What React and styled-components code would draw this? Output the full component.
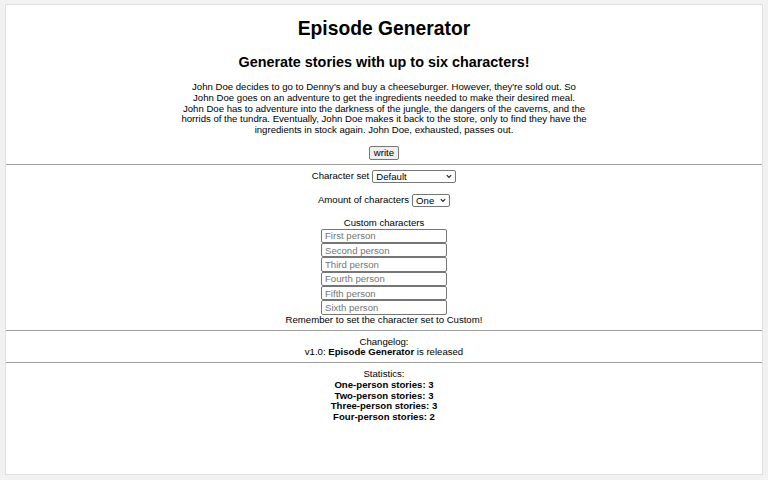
import React from "react";
import styled, { createGlobalStyle } from "styled-components";

const GlobalStyle = createGlobalStyle`
  html, body {
    margin: 0;
    padding: 0;
    background: #f2f2f2;
  }
  body {
    font-family: "Liberation Sans", Arial, sans-serif;
    font-size: 9.6px;
    color: #000;
  }
`;

const Page = styled.div`
  padding: 4px 5px 5px 5px;
  height: 480px;
  box-sizing: border-box;
`;

const Card = styled.div`
  background: #fff;
  border: 1px solid #e0e0e0;
  height: 100%;
  box-sizing: border-box;
  text-align: center;
  line-height: 10.75px;
`;

const Section = styled.section`
  padding: ${(p) => p.pad || "0"};
`;

const Title = styled.h1`
  font-size: 19.3px;
  line-height: 24px;
  margin: 12px 0 0;
`;

const Subtitle = styled.h2`
  font-size: 14.4px;
  line-height: 18px;
  margin: 12px 0 0;
`;

const Story = styled.p`
  margin: 11px auto 0;
  white-space: nowrap;
`;

const WriteButton = styled.button`
  font: inherit;
  margin-top: 10px;
  padding: 1px 4px;
  height: 14px;
  line-height: 10px;
  background: #efefef;
  border: 1px solid #767676;
  border-radius: 2px;
  color: #000;
`;

const Rule = styled.hr`
  border: none;
  border-top: 1px solid #a0a0a0;
  margin: ${(p) => p.gap || "4px"} 0 0;
`;

const Field = styled.div`
  margin-top: ${(p) => p.top || "0"};
  display: flex;
  justify-content: center;
  align-items: center;
  gap: 3px;
`;

const SelectBox = styled.span`
  position: relative;
  display: inline-flex;
`;

const Select = styled.select`
  appearance: none;
  font: inherit;
  height: 13px;
  width: ${(p) => p.w};
  padding: 0 0 0 3px;
  border: 1px solid #767676;
  border-radius: 2px;
  background: #fff;
  color: #000;
  line-height: 11px;
`;

const Chevron = styled.svg`
  position: absolute;
  right: 4px;
  top: 4px;
  width: 6px;
  height: 5px;
  pointer-events: none;
`;

const NameList = styled.div`
  display: flex;
  flex-direction: column;
  align-items: center;
`;

const NameInput = styled.input`
  font: inherit;
  width: 126px;
  height: 14.4px;
  box-sizing: border-box;
  padding: 0 3px;
  border: 1px solid #767676;
  border-radius: 2px;
  margin: 0;
  &::placeholder {
    color: #757575;
  }
`;

const Line = styled.div`
  margin-top: ${(p) => p.top || "0"};
`;

const Bold = styled.b``;

const Dropdown = ({ w, value, options }) => (
  <SelectBox>
    <Select w={w} defaultValue={value}>
      {options.map((o) => (
        <option key={o}>{o}</option>
      ))}
    </Select>
    <Chevron viewBox="0 0 6 5">
      <path d="M0.8 1.2 L3 3.4 L5.2 1.2" fill="none" stroke="#222" strokeWidth="1.2" />
    </Chevron>
  </SelectBox>
);

const storyLines = [
  "John Doe decides to go to Denny's and buy a cheeseburger. However, they're sold out. So",
  "John Doe goes on an adventure to get the ingredients needed to make their desired meal.",
  "John Doe has to adventure into the darkness of the jungle, the dangers of the caverns, and the",
  "horrids of the tundra. Eventually, John Doe makes it back to the store, only to find they have the",
  "ingredients in stock again. John Doe, exhausted, passes out.",
];

const characters = ["First", "Second", "Third", "Fourth", "Fifth", "Sixth"];

const stats = [
  ["One", 3],
  ["Two", 3],
  ["Three", 3],
  ["Four", 2],
];

export default function App() {
  return (
    <>
      <GlobalStyle />
      <Page>
        <Card>
          <Section>
            <Title>Episode Generator</Title>
            <Subtitle>Generate stories with up to six characters!</Subtitle>
            <Story>
              {storyLines.map((l, i) => (
                <React.Fragment key={i}>
                  {i > 0 && <br />}
                  {l}
                </React.Fragment>
              ))}
            </Story>
            <WriteButton>write</WriteButton>
          </Section>
          <Rule gap="4px" />
          <Section>
            <Field top="5px">
              Character set
              <Dropdown w="84px" value="Default" options={["Default", "Custom"]} />
            </Field>
            <Field top="11px">
              Amount of characters
              <Dropdown
                w="38px"
                value="One"
                options={["One", "Two", "Three", "Four", "Five", "Six"]}
              />
            </Field>
            <Line top="11px">Custom characters</Line>
            <NameList>
              {characters.map((c) => (
                <NameInput key={c} placeholder={`${c} person`} />
              ))}
            </NameList>
            <Line>Remember to set the character set to Custom!</Line>
          </Section>
          <Rule gap="4px" />
          <Section pad="6px 0 0">
            <Line>Changelog:</Line>
            <Line>
              v1.0: <Bold>Episode Generator</Bold> is released
            </Line>
          </Section>
          <Rule gap="4px" />
          <Section pad="6px 0 0">
            <Line>Statistics:</Line>
            {stats.map(([n, v]) => (
              <Line key={n}>
                <Bold>
                  {n}-person stories: {v}
                </Bold>
              </Line>
            ))}
          </Section>
        </Card>
      </Page>
    </>
  );
}
